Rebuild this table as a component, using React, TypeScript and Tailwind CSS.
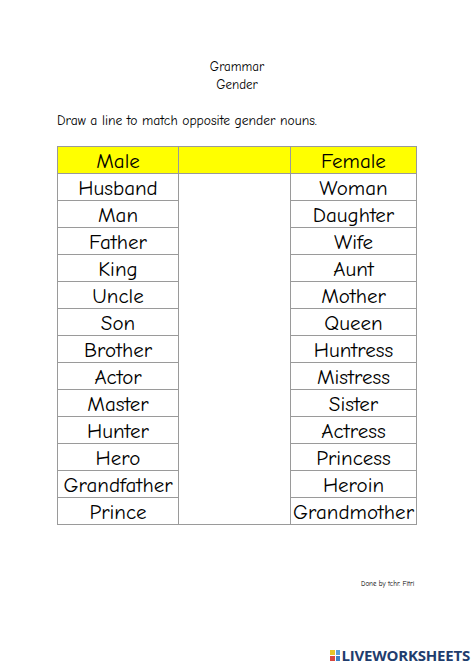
const pairs: [string, string][] = [
  ["Husband", "Woman"],
  ["Man", "Daughter"],
  ["Father", "Wife"],
  ["King", "Aunt"],
  ["Uncle", "Mother"],
  ["Son", "Queen"],
  ["Brother", "Huntress"],
  ["Actor", "Mistress"],
  ["Master", "Sister"],
  ["Hunter", "Actress"],
  ["Hero", "Princess"],
  ["Grandfather", "Heroin"],
  ["Prince", "Grandmother"],
];

const font = { fontFamily: '"Comic Sans MS", "Comic Neue", "DejaVu Sans", sans-serif' };

function Logo() {
  return (
    <div className="flex items-center gap-[1px]">
      <div className="grid grid-cols-2 gap-[1px] w-[10px] h-[11px]">
        <span className="bg-[#e6c52a]" />
        <span className="bg-[#5aa0d8]" />
        <span className="bg-[#d9473f]" />
        <span className="bg-[#3c7fc4]" />
      </div>
      <span className="font-['Open_Sans',sans-serif] font-bold text-[15px] leading-none tracking-[-0.2px] text-[#1f3d6e]">
        LIVEWORKSHEETS
      </span>
    </div>
  );
}

export default function App() {
  return (
    <div className="w-[474px] h-[669px] bg-white text-black flex flex-col items-start" style={font}>
      <div className="pt-[58px] w-full flex flex-col items-center text-[13px] leading-[18px]">
        <p>Grammar</p>
        <p>Gender</p>
      </div>
      <p className="pl-[57px] mt-[17px] text-[13.6px] leading-[19px]">
        Draw a line to match opposite gender nouns.
      </p>
      <table className="ml-[57px] mt-[16px] w-[359px] table-fixed border-collapse text-[21px] leading-none">
        <thead>
          <tr className="bg-[#ffff00] h-[27px]">
            <th className="w-[121px] pt-[3px] border border-[#9a9a9a] font-normal">Male</th>
            <th className="w-[112px] border border-[#9a9a9a] font-normal"></th>
            <th className="w-[126px] pt-[3px] border border-[#9a9a9a] font-normal">Female</th>
          </tr>
        </thead>
        <tbody>
          {pairs.map(([m, f], i) => (
            <tr key={m} className="h-[27px]">
              <td className="pt-[3px] border border-[#9a9a9a] text-center whitespace-nowrap">{m}</td>
              {i === 0 && <td rowSpan={13} className="border border-[#9a9a9a]" />}
              <td className="pt-[3px] border border-[#9a9a9a] text-center whitespace-nowrap">{f}</td>
            </tr>
          ))}
        </tbody>
      </table>
      <p className="ml-[361px] mt-[56px] text-[7px] leading-none">Done by tchr. Fitri</p>
      <div className="mt-auto mb-[6px] mr-[4px] self-end">
        <Logo />
      </div>
    </div>
  );
}
